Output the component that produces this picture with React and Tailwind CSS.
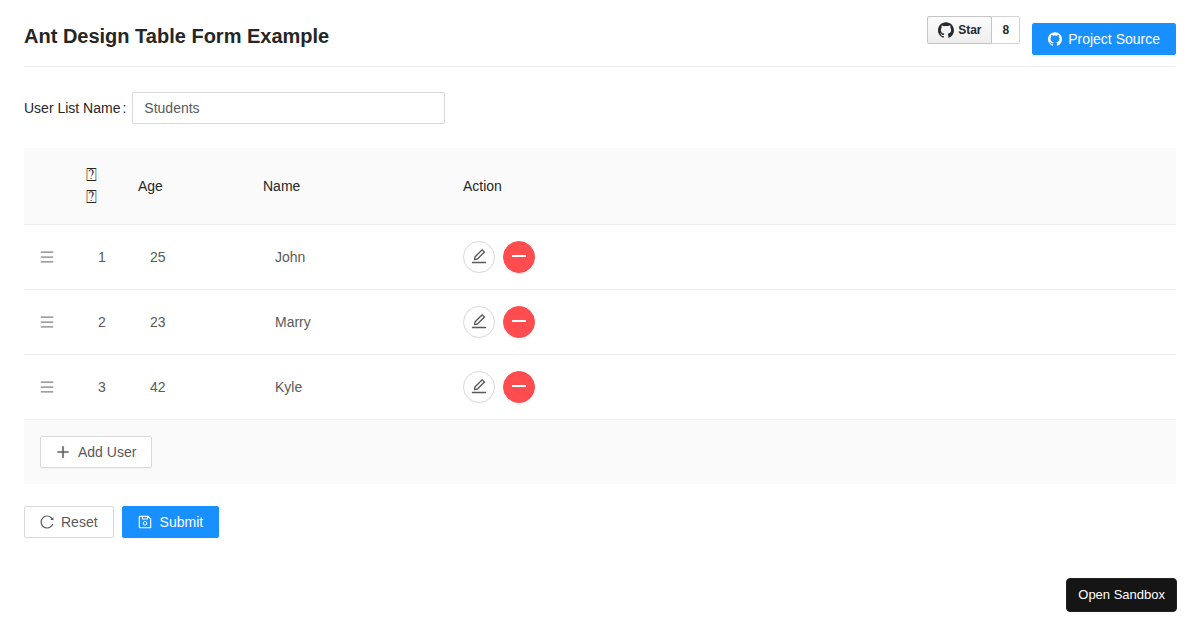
import { useState } from "react";
import { AiOutlineEdit, AiOutlineGithub, AiOutlineMenu, AiOutlineReload, AiOutlineSave } from "react-icons/ai";

const INITIAL_USERS = [
  { id: 1, age: 25, name: "John" },
  { id: 2, age: 23, name: "Marry" },
  { id: 3, age: 42, name: "Kyle" },
];

// trims the empty margin that the ant icons have in their default box
const ICON_BOX = "64 64 896 896";

const BUTTON = "inline-flex h-8 items-center rounded-xs border px-[15px] whitespace-nowrap";
const DEFAULT_BUTTON = "border-[#d9d9d9] bg-white text-[#595959] shadow-[0_2px_0_rgba(0,0,0,0.015)]";
const PRIMARY_BUTTON = "border-[#1890ff] bg-[#1890ff] text-white shadow-[0_2px_0_rgba(0,0,0,0.045)]";
const CIRCLE = "inline-flex size-8 items-center justify-center rounded-full border";

function MinusIcon() {
  return (
    <svg viewBox="0 0 16 16" className="size-4" fill="currentColor" aria-hidden="true">
      <rect x="1" y="6" width="14" height="2" rx="0.2" />
    </svg>
  );
}

function PlusIcon() {
  return (
    <svg viewBox={ICON_BOX} className="size-3.5" fill="currentColor" aria-hidden="true">
      <path d="M482 152h60q8 0 8 8v704q0 8-8 8h-60q-8 0-8-8V160q0-8 8-8z" stroke="currentColor" strokeWidth="30" />
      <path d="M176 474h672q8 0 8 8v60q0 8-8 8H176q-8 0-8-8v-60q0-8 8-8z" stroke="currentColor" strokeWidth="30" />
    </svg>
  );
}

function StarButton() {
  return (
    <div className="flex h-7 text-xs font-bold text-[#24292e]">
      <a
        href="#star"
        className="flex items-center gap-1 rounded-l-xs border border-[#c5c5c5] bg-linear-to-b from-[#fcfcfc] to-[#eeeeee] px-[10px]"
      >
        <AiOutlineGithub size={16} viewBox={ICON_BOX} />
        Star
      </a>
      <a
        href="#stargazers"
        className="flex items-center rounded-r-xs border border-l-0 border-[#d4d4d4] bg-white px-[10px]"
      >
        8
      </a>
    </div>
  );
}

export default function App() {
  const [listName, setListName] = useState("Students");
  const [users, setUsers] = useState(INITIAL_USERS);

  const removeUser = (id) => setUsers(users.filter((u) => u.id !== id));

  const addUser = () => {
    const id = Math.max(0, ...users.map((u) => u.id)) + 1;
    setUsers([...users, { id, age: "", name: "" }]);
  };

  const reset = () => {
    setListName("Students");
    setUsers(INITIAL_USERS);
  };

  return (
    <div className="px-6 pt-4 font-['Liberation_Sans',sans-serif] text-sm leading-[22px] text-[#595959]">
      {/* Header */}
      <header className="flex items-start justify-between border-b border-[#f0f0f0] pb-[11px]">
        <h1 className="pt-1.5 text-xl leading-7 font-bold text-[#262626]">Ant Design Table Form Example</h1>
        <div className="flex items-start gap-3">
          <StarButton />
          <a href="#source" className={`${BUTTON} ${PRIMARY_BUTTON} mt-[7px] gap-1.5`}>
            <AiOutlineGithub size={14} viewBox={ICON_BOX} />
            Project Source
          </a>
        </div>
      </header>

      <form onSubmit={(e) => e.preventDefault()}>
        <div className="mt-[25px] flex items-center gap-1.5">
          <label htmlFor="listName" className="text-[#262626]">
            User List Name<span className="ml-0.5">:</span>
          </label>
          <input
            id="listName"
            value={listName}
            onChange={(e) => setListName(e.target.value)}
            className="h-8 w-[313px] rounded-xs border border-[#d9d9d9] px-[11px]"
          />
        </div>

        {/* User table */}
        <table className="mt-6 w-full table-fixed text-left">
          <colgroup>
            <col className="w-[46px]" />
            <col className="w-[52px]" />
            <col className="w-[125px]" />
            <col className="w-[200px]" />
            <col />
          </colgroup>
          <thead>
            <tr className="border-b border-[#f0f0f0] bg-[#fafafa] text-[#262626]">
              <th className="p-4"></th>
              <th className="p-4 font-['DejaVu_Sans',sans-serif] text-lg leading-[22px] font-normal">
                <span className="block h-[22px]">⍰</span>
                <span className="block h-[22px]">⍰</span>
              </th>
              <th className="p-4 font-normal">Age</th>
              <th className="p-4 font-normal">Name</th>
              <th className="p-4 font-normal">Action</th>
            </tr>
          </thead>
          <tbody>
            {users.map((user, i) => (
              <tr key={user.id} className="border-b border-[#f0f0f0]">
                <td className="py-4 pl-4 text-[#808080]">
                  <AiOutlineMenu size={14} viewBox={ICON_BOX} />
                </td>
                <td className="py-4 pl-7">{i + 1}</td>
                <td className="py-4 pl-7">{user.age}</td>
                <td className="py-4 pl-7">{user.name}</td>
                <td className="px-4 py-4">
                  <div className="flex gap-2">
                    <button type="button" aria-label="Edit" className={`${CIRCLE} ${DEFAULT_BUTTON} pb-0.5`}>
                      <AiOutlineEdit size={16} viewBox={ICON_BOX} />
                    </button>
                    <button
                      type="button"
                      aria-label="Remove"
                      onClick={() => removeUser(user.id)}
                      className={`${CIRCLE} border-[#ff4d4f] bg-[#ff4d4f] text-white shadow-[0_2px_0_rgba(0,0,0,0.045)]`}
                    >
                      <MinusIcon />
                    </button>
                  </div>
                </td>
              </tr>
            ))}
          </tbody>
        </table>
        <div className="flex bg-[#fafafa] p-4">
          <button type="button" onClick={addUser} className={`${BUTTON} ${DEFAULT_BUTTON} gap-2`}>
            <PlusIcon />
            Add User
          </button>
        </div>

        <div className="mt-[22px] flex gap-2">
          <button type="button" onClick={reset} className={`${BUTTON} ${DEFAULT_BUTTON} gap-[7px]`}>
            <AiOutlineReload size={14} viewBox={ICON_BOX} />
            Reset
          </button>
          <button type="submit" className={`${BUTTON} ${PRIMARY_BUTTON} gap-2`}>
            <AiOutlineSave size={14} viewBox={ICON_BOX} />
            Submit
          </button>
        </div>
      </form>

      <button
        type="button"
        className="fixed right-[23px] bottom-[18px] h-[34px] rounded-sm border border-[#222222] bg-[#151515] px-[11px] text-[13px] text-white"
      >
        Open Sandbox
      </button>
    </div>
  );
}
